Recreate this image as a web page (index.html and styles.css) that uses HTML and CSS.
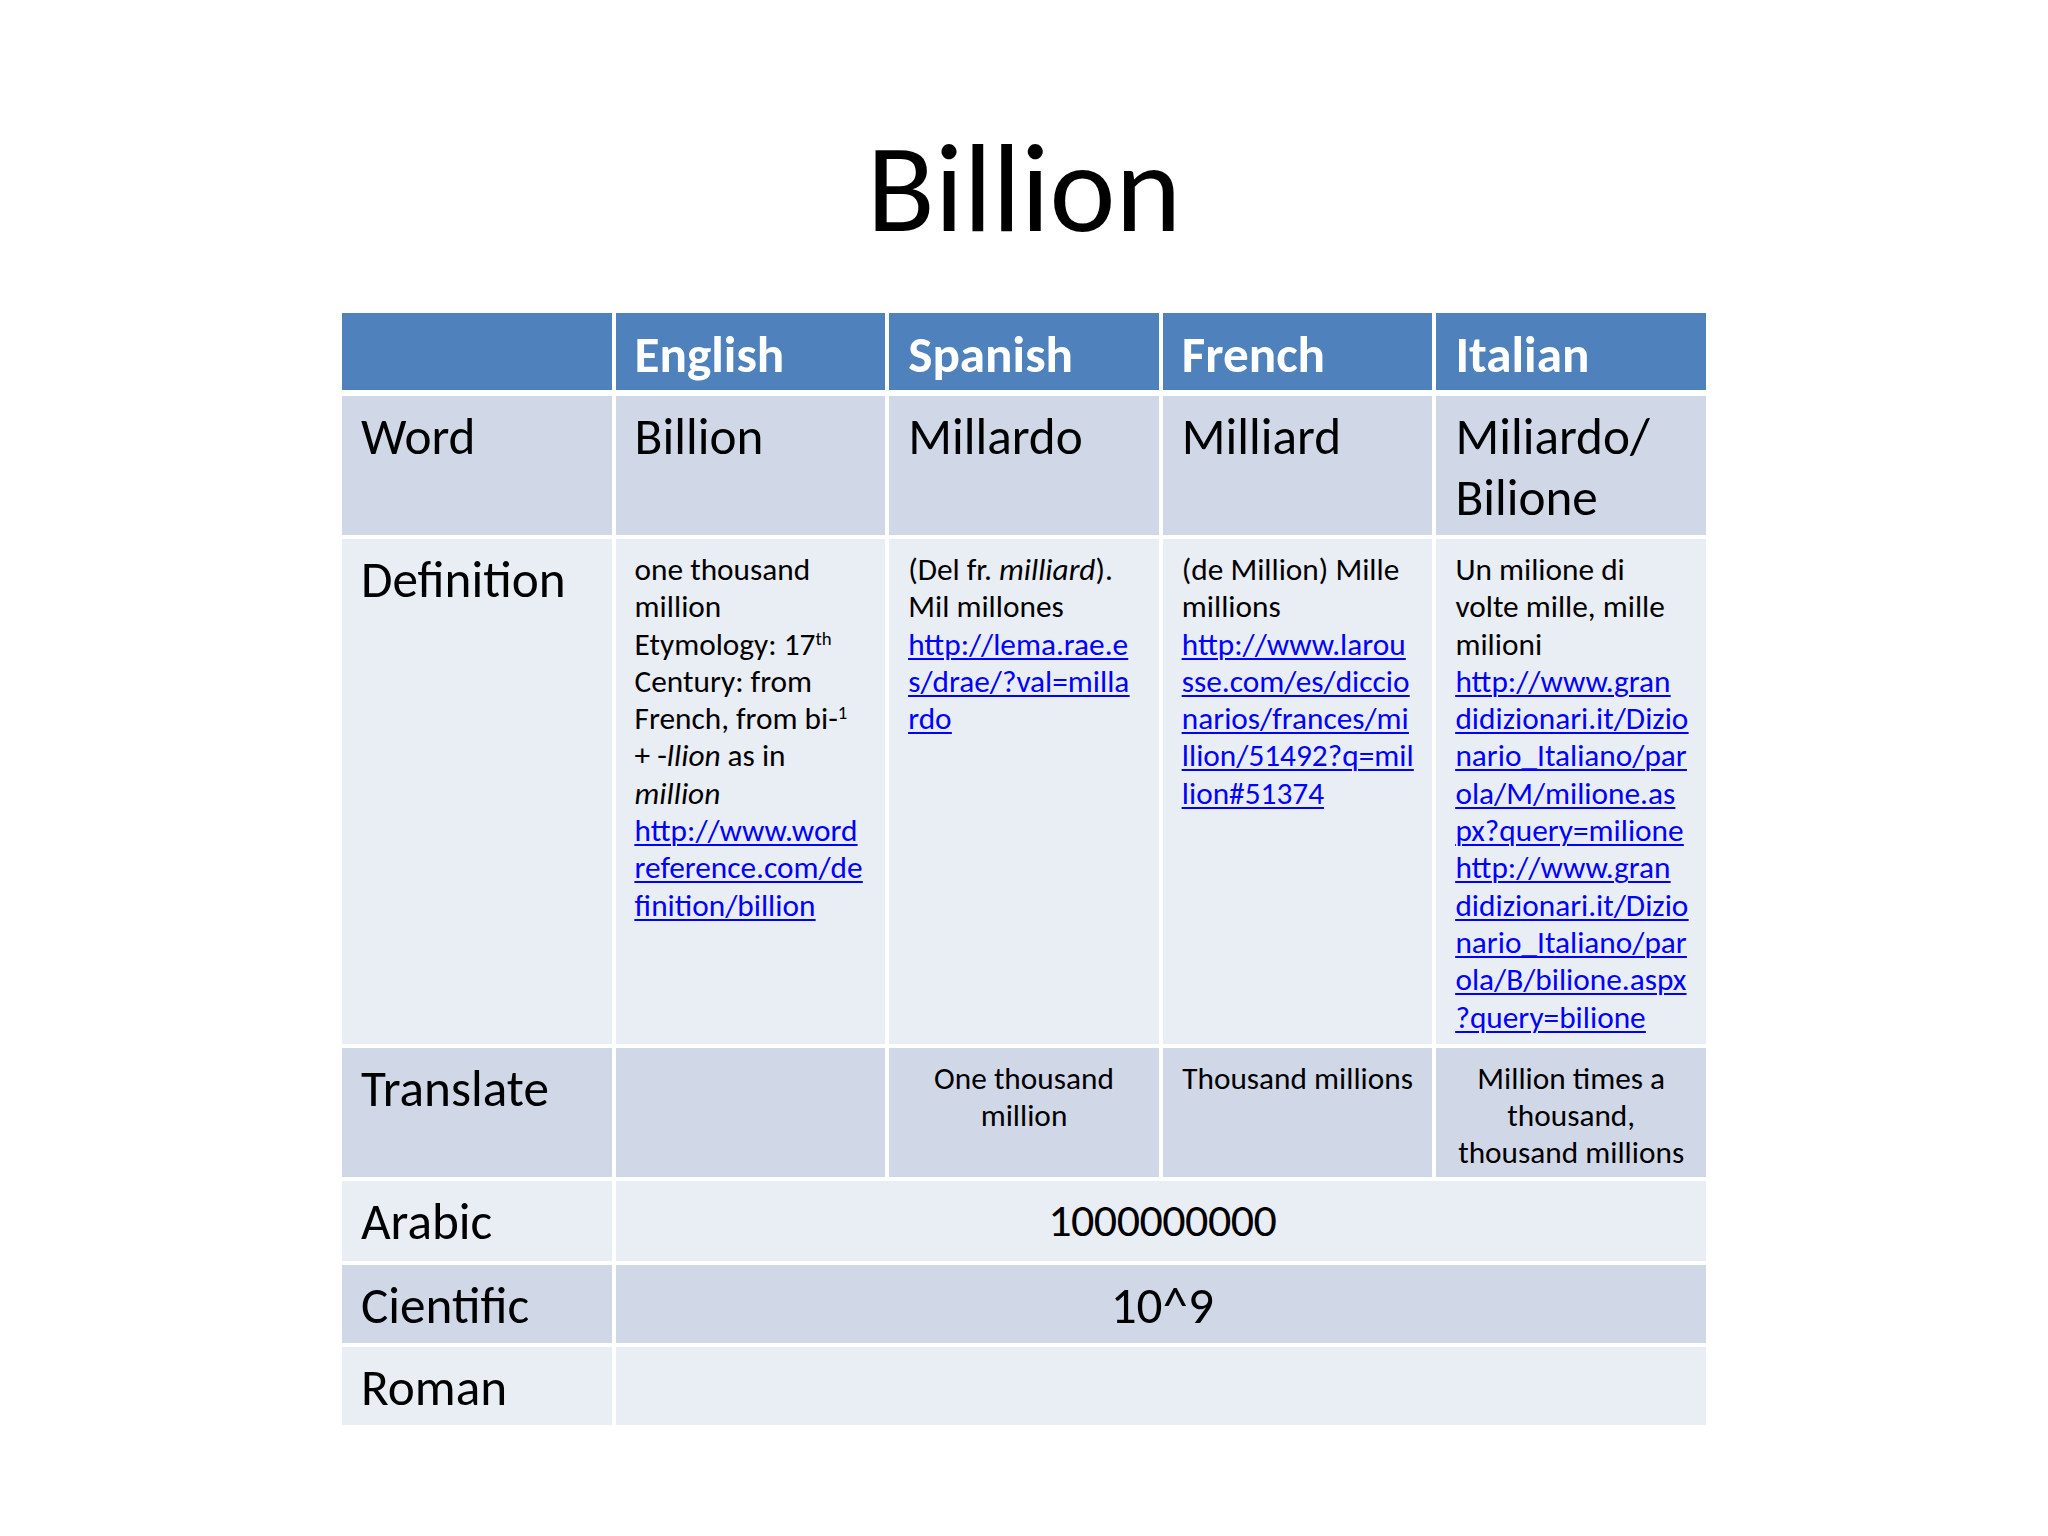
FILE: index.html
```html
<!DOCTYPE html>
<html lang="en">
<head>
<meta charset="utf-8">
<title>Billion</title>
<link rel="stylesheet" href="styles.css">
</head>
<body>
<main class="slide">
  <h1 class="title">Billion</h1>
  <div class="grid">
    <div class="cell head"></div>
    <div class="cell head">English</div>
    <div class="cell head">Spanish</div>
    <div class="cell head">French</div>
    <div class="cell head">Italian</div>

    <div class="cell dark big">Word</div>
    <div class="cell dark big">Billion</div>
    <div class="cell dark big">Millardo</div>
    <div class="cell dark big">Milliard</div>
    <div class="cell dark big"><span class="ln">Miliardo/</span><span class="ln">Bilione</span></div>

    <div class="cell light big">Definition</div>
    <div class="cell light small">
      <span class="ln">one thousand</span>
      <span class="ln">million</span>
      <span class="ln">Etymology: 17<sup>th</sup></span>
      <span class="ln">Century: from</span>
      <span class="ln">French, from bi-<sup class="one">1</sup></span>
      <span class="ln">+ -<i>llion</i> as in</span>
      <span class="ln"><i>million</i></span>
      <a class="link" href="#"><span class="ln">http://www.word</span><span class="ln">reference.com/de</span><span class="ln">finition/billion</span></a>
    </div>
    <div class="cell light small">
      <span class="ln">(Del fr. <i>milliard</i>).</span>
      <span class="ln">Mil millones</span>
      <a class="link" href="#"><span class="ln">http://lema.rae.e</span><span class="ln">s/drae/?val=milla</span><span class="ln">rdo</span></a>
    </div>
    <div class="cell light small">
      <span class="ln">(de Million) Mille</span>
      <span class="ln">millions</span>
      <a class="link" href="#"><span class="ln">http://www.larou</span><span class="ln">sse.com/es/diccio</span><span class="ln">narios/frances/mi</span><span class="ln">llion/51492?q=mil</span><span class="ln">lion#51374</span></a>
    </div>
    <div class="cell light small">
      <span class="ln">Un milione di</span>
      <span class="ln">volte mille, mille</span>
      <span class="ln">milioni</span>
      <a class="link" href="#"><span class="ln">http://www.gran</span><span class="ln">didizionari.it/Dizio</span><span class="ln">nario_Italiano/par</span><span class="ln">ola/M/milione.as</span><span class="ln">px?query=milione</span></a>
      <a class="link" href="#"><span class="ln">http://www.gran</span><span class="ln">didizionari.it/Dizio</span><span class="ln">nario_Italiano/par</span><span class="ln">ola/B/bilione.aspx</span><span class="ln">?query=bilione</span></a>
    </div>

    <div class="cell dark big">Translate</div>
    <div class="cell dark small center"></div>
    <div class="cell dark small center"><span class="ln">One thousand</span><span class="ln">million</span></div>
    <div class="cell dark small center"><span class="ln">Thousand millions</span></div>
    <div class="cell dark small center"><span class="ln">Million times a</span><span class="ln">thousand,</span><span class="ln">thousand millions</span></div>

    <div class="cell light big">Arabic</div>
    <div class="cell light big center span4 num">1000000000</div>

    <div class="cell dark big">Cientific</div>
    <div class="cell dark big center span4">10^9</div>

    <div class="cell light big">Roman</div>
    <div class="cell light big span4"></div>
  </div>
</main>
</body>
</html>
```

FILE: styles.css
```css
* { box-sizing: border-box; }

html, body {
  margin: 0;
  padding: 0;
  background: #ffffff;
}

.slide {
  width: 2048px;
  height: 1536px;
  font-family: Carlito, Lato, "Liberation Sans", sans-serif;
  color: #000000;
  overflow: hidden;
}

.title {
  margin: 114px 0 0 0;
  height: 199px;
  font-size: 125px;
  line-height: 150px;
  font-weight: 400;
  text-align: center;
}

.grid {
  width: 1364px;
  margin: 0 auto;
  display: grid;
  grid-template-columns: repeat(5, 1fr);
  grid-template-rows: 79px 139px auto 129px 80px 78px 78px;
  column-gap: 4px;
  row-gap: 4px;
}

.cell {
  padding: 10px 16px 0 19px;
  min-width: 0;
}

.head {
  background: #4f81bd;
  color: #ffffff;
  font-weight: 700;
  font-size: 51.2px;
  line-height: 61px;
  padding-top: 11px;
  margin-bottom: 2px;
}

.dark { background: #d0d8e8; }
.light { background: #e9edf4; }

.big {
  font-size: 51.2px;
  line-height: 61px;
}

.small {
  font-size: 31.3px;
  line-height: 37.3px;
  padding-top: 12px;
  padding-bottom: 8px;
}

.small.center {
  padding-left: 12px;
  padding-right: 12px;
}

.ln {
  display: block;
  white-space: nowrap;
}

.link {
  display: block;
  color: #0000ff;
  text-decoration: underline;
  text-underline-offset: 3px;
  text-decoration-thickness: 2px;
}

.link .ln {
  text-decoration: underline;
  text-decoration-thickness: 2px;
  text-underline-offset: 3px;
}

sup {
  font-size: 60%;
  line-height: 0;
  vertical-align: 0.55em;
}

.center { text-align: center; }

.span4 { grid-column: span 4; }

.num {
  font-size: 46px;
  padding-top: 9px;
  letter-spacing: -0.5px;
}
```
